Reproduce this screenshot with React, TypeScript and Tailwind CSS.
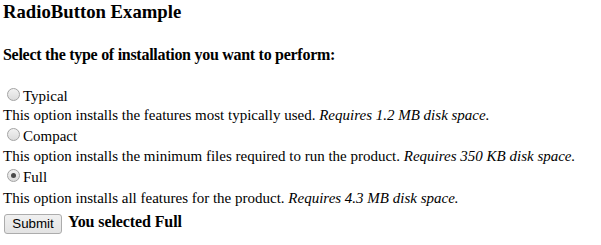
import React from "react";

function Radio({ checked }: { checked?: boolean }) {
  return (
    <span className="inline-block w-[13px] h-[13px] ml-[4px] mr-[3px] rounded-full border border-[#a3a3a3] bg-gradient-to-b from-[#f2f2f2] to-[#dcdcdc] relative align-baseline">
      {checked && (
        <span className="absolute left-[3px] top-[3px] w-[5px] h-[5px] rounded-full bg-[#4a4a4a]" />
      )}
    </span>
  );
}

export default function App() {
  return (
    <div className="pl-[3px] text-black bg-white font-['Liberation_Serif','Times_New_Roman',serif] text-[15px] w-[601px] h-[245px]">
      <h3 className="text-[18.72px] font-bold leading-[24px]">RadioButton Example</h3>
      <div className="mt-[21px] text-[16px] tracking-[-0.28px] font-bold leading-[19px]">
        Select the type of installation you want to perform:
      </div>
      <div className="mt-[22px] leading-[20px]">
        <Radio />
        Typical
      </div>
      <div className="leading-[19px]">
        This option installs the features most typically used. <i>Requires 1.2 MB disk space.</i>
      </div>
      <div className="leading-[22px]">
        <Radio />
        Compact
      </div>
      <div className="leading-[18px]">
        This option installs the minimum files required to run the product. <i>Requires 350 KB disk space.</i>
      </div>
      <div className="leading-[24px]">
        <Radio checked />
        Full
      </div>
      <div className="leading-[18px]">
        This option installs all features for the product. <i>Requires 4.3 MB disk space.</i>
      </div>
      <div className="mt-[7px] flex items-start">
        <button className="ml-[1px] w-[58px] h-[20px] border border-[#acacac] rounded-[3px] bg-gradient-to-b from-[#f0f0f0] to-[#e3e3e3] font-['Liberation_Sans',Arial,sans-serif] text-[13.33px] leading-[18px] text-black">
          Submit
        </button>
        <span className="ml-[6px] text-[16px] font-bold leading-[15px] tracking-[-0.1px]">You selected Full</span>
      </div>
    </div>
  );
}
